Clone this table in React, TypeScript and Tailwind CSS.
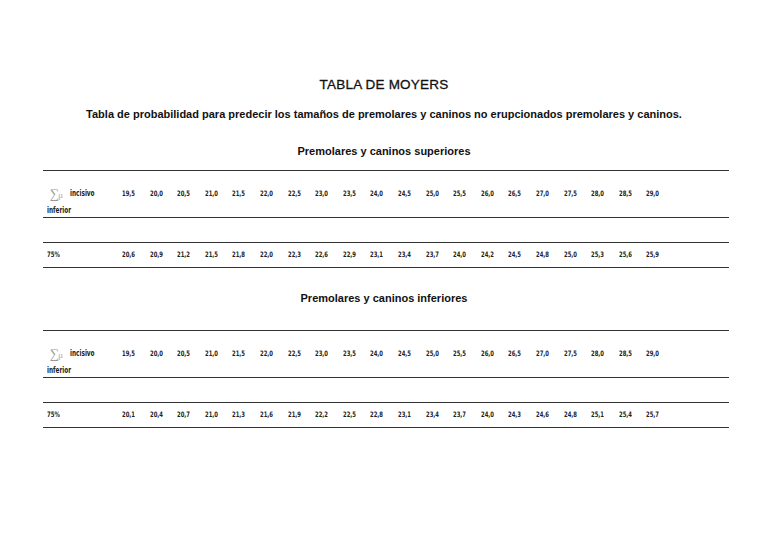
import React from "react";

const superioresValues = ["20,6", "20,9", "21,2", "21,5", "21,8", "22,0", "22,3", "22,6", "22,9", "23,1", "23,4", "23,7", "24,0", "24,2", "24,5", "24,8", "25,0", "25,3", "25,6", "25,9"];
const inferioresValues = ["20,1", "20,4", "20,7", "21,0", "21,3", "21,6", "21,9", "22,2", "22,5", "22,8", "23,1", "23,4", "23,7", "24,0", "24,3", "24,6", "24,8", "25,1", "25,4", "25,7"];

// 19,5 ... 29,0 en pasos de 0,5
const sumaIncisivos = Array.from({ length: 20 }, (_, i) => (19.5 + i * 0.5).toFixed(1).replace(".", ","));

const narrow = { fontFamily: '"Liberation Sans Narrow", "DejaVu Sans Condensed", "Liberation Sans", sans-serif' };

function ValueCells({ values }: { values: string[] }) {
    return (
        <div className="flex">
            {values.map((v, i) => (
                <span key={i} className="w-[27.6px] shrink-0 text-left">
                    <span className="inline-block origin-left scale-x-[0.78]">{v}</span>
                </span>
            ))}
        </div>
    );
}

function MoyersTable({ values }: { values: string[] }) {
    return (
        <div className="w-[686px] text-[7.5px] font-bold text-[#222]" style={narrow}>
            {/* fila de la suma de incisivos */}
            <div className="border-t-[1.5px] border-[#333] pt-[17px] h-[47px]">
                <div className="flex h-[12px] items-center leading-[12px]">
                    <div className="w-[79px] shrink-0 flex items-center pl-[7px]">
                        <span className="inline-flex items-end w-[20px] h-[12px]" style={{ fontFamily: '"Liberation Serif", serif' }}>
                            <span className="text-[13px] font-normal text-[#9a9a9a] leading-[12px]">∑</span>
                            <span className="text-[9px] font-normal text-[#d49a9a] leading-[9px] -ml-[1px]">μ</span>
                        </span>
                        <span className="inline-block origin-left scale-x-[0.8] text-[8px]">incisivo</span>
                    </div>
                    <ValueCells values={sumaIncisivos} />
                </div>
                <div className="mt-[5px] h-[12px] leading-[12px] pl-[4px]">
                    <span className="inline-block origin-left scale-x-[0.8] text-[8px]">inferior</span>
                </div>
            </div>
            <div className="border-t-[1.5px] border-[#333] h-[25px]" />
            <div className="border-t-[1.5px] border-b-[1.5px] border-[#333] h-[26px] flex items-center">
                <div className="w-[79px] shrink-0 pl-[4px]">
                    <span className="inline-block origin-left scale-x-[0.8]">75%</span>
                </div>
                <ValueCells values={values} />
            </div>
        </div>
    );
}

export default function App() {
    return (
        <div className="w-[768px] h-[543px] bg-white text-[#111] overflow-hidden" style={{ fontFamily: '"Liberation Sans", Arial, sans-serif' }}>
            <div className="pt-[77px] flex flex-col items-center">
                <h1 className="h-[16px] leading-[16px] text-[13.5px] font-normal tracking-[0.2px] [-webkit-text-stroke:0.3px_#111]">TABLA DE MOYERS</h1>
                <p className="mt-[14px] h-[14px] leading-[14px] text-[11px] font-bold">
                    Tabla de probabilidad para predecir los tamaños de premolares y caninos no erupcionados premolares y caninos.
                </p>
                <h2 className="mt-[23px] h-[14px] leading-[14px] text-[11px] font-bold">Premolares y caninos superiores</h2>
            </div>
            <div className="pl-[43px] mt-[12px]">
                <MoyersTable values={superioresValues} />
            </div>
            <div className="flex justify-center mt-[23px]">
                <h2 className="h-[14px] leading-[14px] text-[11px] font-bold">Premolares y caninos inferiores</h2>
            </div>
            <div className="pl-[43px] mt-[25px]">
                <MoyersTable values={inferioresValues} />
            </div>
        </div>
    );
}
